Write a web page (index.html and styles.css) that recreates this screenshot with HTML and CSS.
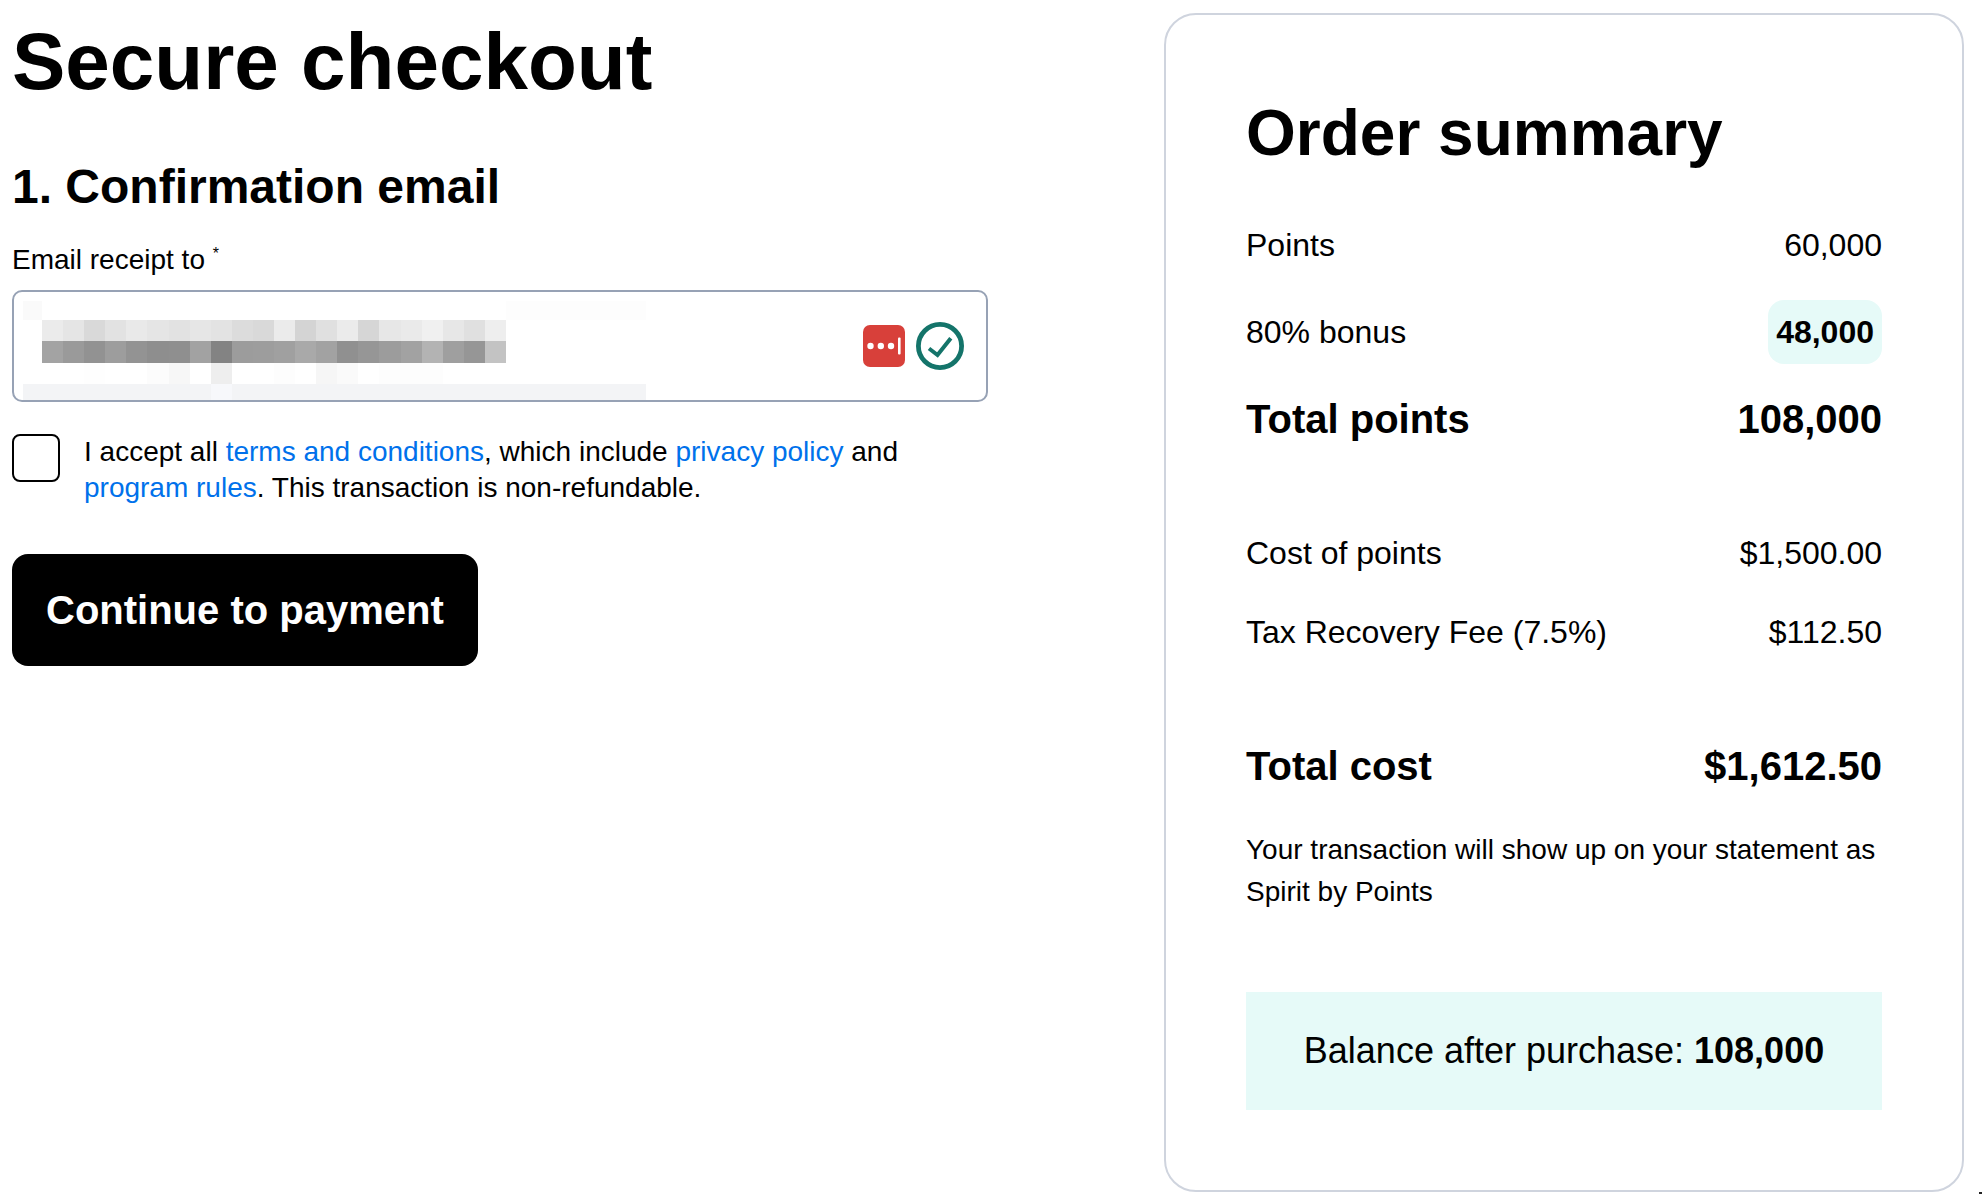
FILE: index.html
```html
<!DOCTYPE html>
<html lang="en">
<head>
  <meta charset="UTF-8">
  <title>Secure checkout</title>
  <link rel="stylesheet" href="styles.css">
</head>
<body>

<div class="page">
  <!-- Checkout form -->
  <main class="checkout">
    <h1>Secure checkout</h1>
    <form id="checkoutForm">
      <h2>1. Confirmation email</h2>
      <label class="field-label" for="email">Email receipt to <sup>*</sup></label>
      <div class="field">
        <input type="email" id="email">
        <svg class="mask" width="623" height="99" viewBox="0 0 623 99" shape-rendering="crispEdges" aria-hidden="true">
          <path fill="#fafafa" d="M0 0h19v19H0z"/>
          <path fill="#fdfdfd" d="M483 0h140v19H483z"/>
          <g id="maskTiles"></g>
          <path fill="#f3f4f6" d="M0 83h623v16H0z"/>
          <path fill="#f7f8fb" d="M188 83h21v16h-21z"/>
        </svg>
        <svg class="icon-password" width="42" height="42" viewBox="0 0 42 42" aria-hidden="true">
          <rect width="42" height="42" rx="7" fill="#d8403a"/>
          <circle cx="7.5" cy="21" r="3.2" fill="#fff"/>
          <circle cx="17.8" cy="21" r="3.2" fill="#fff"/>
          <circle cx="28" cy="21" r="3.2" fill="#fff"/>
          <rect x="35" y="12.5" width="2.6" height="17" rx="1" fill="#fff"/>
        </svg>
        <svg class="icon-valid" width="48" height="48" viewBox="0 0 48 48" fill="none" stroke="#14746a" aria-hidden="true">
          <circle cx="24" cy="24" r="21.6" stroke-width="4.8"/>
          <path d="M13 26.5l8.5 6.5L34.8 16.2" stroke-width="4"/>
        </svg>
      </div>

      <div class="terms">
        <input type="checkbox" id="accept">
        <label for="accept">I accept all <a href="#terms">terms and conditions</a>, which include <a href="#privacy">privacy policy</a> and <a href="#rules">program rules</a>. This transaction is non-refundable.</label>
      </div>

      <button type="submit" class="pay-btn">Continue to payment</button>
    </form>
  </main>

  <!-- Order summary -->
  <aside class="summary">
    <h2>Order summary</h2>
    <dl class="group">
      <div class="row"><dt>Points</dt><dd>60,000</dd></div>
      <div class="row"><dt>80% bonus</dt><dd class="bonus">48,000</dd></div>
      <div class="row total"><dt>Total points</dt><dd>108,000</dd></div>
    </dl>
    <dl class="group">
      <div class="row"><dt>Cost of points</dt><dd>$1,500.00</dd></div>
      <div class="row"><dt>Tax Recovery Fee (7.5%)</dt><dd>$112.50</dd></div>
    </dl>
    <dl class="group">
      <div class="row total"><dt>Total cost</dt><dd>$1,612.50</dd></div>
    </dl>
    <p class="statement">Your transaction will show up on your statement as Spirit by Points</p>
    <p class="balance">Balance after purchase: <strong>108,000</strong></p>
  </aside>
</div>
<span class="corner-mark"></span>

<script>
  // Grey levels of the tiles that hide the email, one list per line
  const rows = [
    { y: 19, h: 21, tones: [235, 229, 217, 226, 233, 229, 226, 230, 227, 220, 217, 235, 212, 224, 235, 214, 231, 234, 240, 231, 224, 238] },
    { y: 40, h: 22, tones: [163, 154, 146, 157, 147, 142, 143, 162, 131, 156, 157, 160, 169, 162, 144, 150, 156, 162, 179, 159, 150, 195] },
    { y: 62, h: 21, tones: [255, 255, 254, 255, 255, 252, 247, 255, 238, 255, 255, 253, 255, 246, 250, 255, 253, 253, 253, 255, 255, 255] }
  ];
  const tiles = document.getElementById('maskTiles');
  rows.forEach(row => {
    row.tones.forEach((tone, i) => {
      const x = Math.round(i * 464 / 22);
      const rect = document.createElementNS('http://www.w3.org/2000/svg', 'rect');
      rect.setAttribute('x', 19 + x);
      rect.setAttribute('y', row.y);
      rect.setAttribute('width', Math.round((i + 1) * 464 / 22) - x);
      rect.setAttribute('height', row.h);
      rect.setAttribute('fill', `rgb(${tone}, ${tone}, ${tone})`);
      tiles.appendChild(rect);
    });
  });

  document.getElementById('checkoutForm').addEventListener('submit', e => e.preventDefault());
</script>

</body>
</html>
```
FILE: styles.css
```css
* {
  box-sizing: border-box;
}
body {
  margin: 0;
  font-family: "Liberation Sans", Helvetica, Arial, sans-serif;
  font-size: 28px;
  line-height: 36px;
  color: #000;
  background: #fff;
}
h1, h2, p, dl, dd {
  margin: 0;
}
a {
  color: #0071eb;
  text-decoration: none;
}
a:hover {
  text-decoration: underline;
}
.page {
  display: grid;
  grid-template-columns: 61fr 50fr;
  gap: 176px;
  align-items: start;
  padding: 13px 18px 0 12px;
}

/* Checkout form */
h1 {
  font-size: 80px;
  line-height: 98px;
  margin-bottom: 46px;
}
.checkout h2 {
  font-size: 48px;
  line-height: 60px;
  margin-bottom: 25px;
}
.field-label {
  display: block;
  margin-bottom: 12px;
}
.field-label sup {
  font-size: 16px;
  line-height: 0;
}
.field {
  position: relative;
  display: flex;
  align-items: center;
  gap: 11px;
  height: 112px;
  padding: 0 22px;
  border: 2px solid #97a2b5;
  border-radius: 10px;
}
.field input {
  flex: 1;
  min-width: 0;
  height: 100%;
  padding: 0 8px;
  border: none;
  outline: none;
  background: none;
  font: inherit;
}
.mask {
  position: absolute;
  top: 9px;
  left: 9px;
}
.terms {
  display: flex;
  align-items: flex-start;
  gap: 24px;
  margin: 32px 0 48px;
}
.terms input {
  appearance: none;
  flex: none;
  width: 48px;
  height: 48px;
  margin: 0;
  border: 2px solid #000;
  border-radius: 8px;
}
.terms input:checked {
  background: #000;
}
.pay-btn {
  padding: 32px 34px;
  border: none;
  border-radius: 16px;
  background: #000;
  color: #fff;
  font: bold 40px/48px "Liberation Sans", Helvetica, Arial, sans-serif;
  cursor: pointer;
}

/* Order summary */
.summary {
  padding: 80px;
  border: 2px solid #cfd4de;
  border-radius: 32px;
}
.summary h2 {
  font-size: 64px;
  line-height: 76px;
  margin-bottom: 50px;
}
.group {
  display: flex;
  flex-direction: column;
  gap: 31px;
  margin-bottom: 86px;
  font-size: 32px;
  line-height: 48px;
}
.row {
  display: flex;
  justify-content: space-between;
  align-items: center;
}
.bonus {
  padding: 8px;
  border-radius: 16px;
  background: #e6faf8;
  font-weight: bold;
}
.total {
  font-size: 40px;
  font-weight: bold;
}
.group:last-of-type {
  margin-bottom: 39px;
}
.statement {
  line-height: 42px;
  margin-bottom: 79px;
}
.balance {
  padding: 35px 16px;
  background: #e6faf8;
  font-size: 36px;
  line-height: 48px;
  text-align: center;
}
.corner-mark {
  position: fixed;
  right: 0;
  bottom: 0;
  width: 3px;
  height: 2px;
  background: #222;
}
```
